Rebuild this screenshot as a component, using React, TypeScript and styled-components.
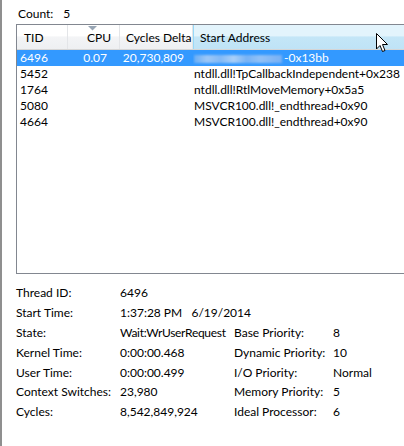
import React from "react";
import styled, { createGlobalStyle } from "styled-components";

const Global = createGlobalStyle`
  html, body { margin: 0; padding: 0; background: #fff; }
  body { font-family: Lato, "Noto Sans", sans-serif; font-size: 12px; color: #000; }
`;

const Page = styled.div`
  position: relative;
  width: 404px;
  height: 446px;
  overflow: hidden;
  background: #fff;
  border-left: 2px solid #8f8f8f;
  padding-left: 14px;
  box-sizing: border-box;
`;

const CountBar = styled.div`
  display: flex;
  gap: 10px;
  height: 24px;
  align-items: center;
  padding-left: 2px;
  padding-top: 2px;
  box-sizing: border-box;
`;

const ListBox = styled.div`
  width: 420px;
  height: 250px;
  border: 1px solid #828790;
  border-right: none;
  box-sizing: border-box;
  background: #fff;
`;

const Header = styled.div`
  display: grid;
  grid-template-columns: 51px 52px 73px 1fr;
  height: 24px;
  border-bottom: 1px solid #d5d5d5;
  white-space: nowrap;
`;

const HeadCell = styled.div<{ $align?: string; $hot?: boolean; $pad?: number }>`
  position: relative;
  display: flex;
  align-items: center;
  overflow: hidden;
  justify-content: ${(p) => (p.$align === "right" ? "flex-end" : "flex-start")};
  padding-left: ${(p) => (p.$align === "right" ? 0 : p.$pad ?? 7)}px;
  padding-right: ${(p) => (p.$align === "right" ? 8 : 0)}px;
  border-right: 1px solid #e3e5e8;
  background: ${(p) =>
    p.$hot
      ? "linear-gradient(#e3f4fc 0%, #e3f4fc 45%, #c4e6f7 50%, #bfe3f6 100%)"
      : "linear-gradient(#ffffff 0%, #ffffff 45%, #f3f4f6 50%, #eef0f2 100%)"};
  ${(p) => (p.$hot ? "border-left: 1px solid #96d9f9;" : "")}
  color: #000;
`;

const SortArrow = styled.svg`
  position: absolute;
  left: 20px;
  top: 1px;
`;

const Row = styled.div<{ $sel?: boolean }>`
  display: grid;
  grid-template-columns: 51px 52px 73px 1fr;
  height: 16px;
  align-items: center;
  background: ${(p) => (p.$sel ? "#3399ff" : "transparent")};
  color: ${(p) => (p.$sel ? "#fff" : "#000")};
  line-height: 16px;
`;

const Cell = styled.div<{ $align?: string; $pad?: number }>`
  text-align: ${(p) => p.$align || "left"};
  padding-left: ${(p) => (p.$align === "right" ? 0 : p.$pad ?? 3)}px;
  padding-right: ${(p) => (p.$align === "right" ? p.$pad ?? 10 : 0)}px;
  white-space: nowrap;
  overflow: hidden;
`;

const Blur = styled.span`
  display: inline-block;
  width: 88px;
  height: 8px;
  vertical-align: middle;
  margin-right: 2px;
  background: linear-gradient(90deg, #6fb0f5 0%, #a9cdf7 15%, #8bbdf6 30%, #b7d6f8 45%, #7fb6f5 60%, #9cc6f7 75%, #7fb3f3 100%);
  filter: blur(1px);
  opacity: 0.9;
`;

const Details = styled.div`
  display: grid;
  grid-template-columns: 104px 114px 99px 1fr;
  grid-auto-rows: 19.8px;
  align-items: center;
  padding-top: 9px;
  white-space: nowrap;
`;

const Label = styled.div``;
const Value = styled.div<{ $span?: boolean; $tight?: boolean }>`
  ${(p) => (p.$span ? "grid-column: 2 / 5;" : "")}
  ${(p) => (p.$tight ? "letter-spacing: -0.3px;" : "")}
`;

const Cursor = styled.svg`
  position: absolute;
  left: 374px;
  top: 33px;
`;

const rows = [
  { tid: "6496", cpu: "0.07", cyc: "20,730,809", addr: "-0x13bb", sel: true },
  { tid: "5452", cpu: "", cyc: "", addr: "ntdll.dll!TpCallbackIndependent+0x238" },
  { tid: "1764", cpu: "", cyc: "", addr: "ntdll.dll!RtlMoveMemory+0x5a5" },
  { tid: "5080", cpu: "", cyc: "", addr: "MSVCR100.dll!_endthread+0x90" },
  { tid: "4664", cpu: "", cyc: "", addr: "MSVCR100.dll!_endthread+0x90" },
];

const details: [string, string, string?, string?][] = [
  ["Thread ID:", "6496"],
  ["Start Time:", "1:37:28 PM\u00a0\u00a0 6/19/2014"],
  ["State:", "Wait:WrUserRequest", "Base Priority:", "8"],
  ["Kernel Time:", "0:00:00.468", "Dynamic Priority:", "10"],
  ["User Time:", "0:00:00.499", "I/O Priority:", "Normal"],
  ["Context Switches:", "23,980", "Memory Priority:", "5"],
  ["Cycles:", "8,542,849,924", "Ideal Processor:", "6"],
];

export default function App() {
  return (
    <Page>
      <Global />
      <CountBar>
        <span>Count:</span>
        <span>5</span>
      </CountBar>
      <ListBox>
        <Header>
          <HeadCell>TID</HeadCell>
          <HeadCell $align="right">
            <SortArrow width="9" height="5" viewBox="0 0 9 5">
              <path d="M0 0 H9 L4.5 4.5 Z" fill="#97a5b4" />
            </SortArrow>
            CPU
          </HeadCell>
          <HeadCell $pad={6}>Cycles Delta</HeadCell>
          <HeadCell $hot $pad={6}>Start Address</HeadCell>
        </Header>
        {rows.map((r) => (
          <Row key={r.tid} $sel={r.sel}>
            <Cell $pad={3}>{r.tid}</Cell>
            <Cell $align="right" $pad={13}>{r.cpu}</Cell>
            <Cell $align="right" $pad={9}>{r.cyc}</Cell>
            <Cell $pad={1}>
              {r.sel && <Blur />}
              {r.addr}
            </Cell>
          </Row>
        ))}
      </ListBox>
      <Details>
        {details.map((d) => (
          <React.Fragment key={d[0]}>
            <Label>{d[0]}</Label>
            <Value $span={!d[2]} $tight={d[1].startsWith("Wait")}>{d[1]}</Value>
            {d[2] && <Label>{d[2]}</Label>}
            {d[3] && <Value>{d[3]}</Value>}
          </React.Fragment>
        ))}
      </Details>
      <Cursor width="13" height="20" viewBox="0 0 13 20">
        <path d="M0.5 0.5 L0.5 16 L4 12.5 L6.5 18.5 L9 17.5 L6.5 11.5 L11.5 11.5 Z" fill="#fff" stroke="#000" strokeWidth="1" strokeLinejoin="miter" />
      </Cursor>
    </Page>
  );
}
